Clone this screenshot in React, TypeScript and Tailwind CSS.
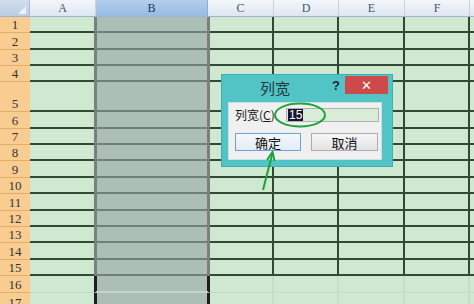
import React from "react";

const rowHeights = [16, 17, 16, 16, 30, 17, 16, 16, 17, 16, 17, 16, 16, 17, 16, 17, 11];

const headerCols = [
  { l: "A", w: "w-[66px]" },
  { l: "B", w: "w-[112px]" },
  { l: "C", w: "w-[66px]" },
  { l: "D", w: "w-[65px]" },
  { l: "E", w: "w-[66px]" },
  { l: "F", w: "w-[65px]" },
];

const serif = { fontFamily: '"Liberation Serif", "DejaVu Serif", serif' };
const cjk = { fontFamily: '"Noto Sans CJK SC", "Noto Sans", sans-serif' };

function Row({ h, i }: { h: number; i: number }) {
  const grid = i < 15;
  const lineB = grid ? "border-b-2 border-b-[#2e4a35]" : "border-b border-b-[#c4dcc6]";
  const last = i === 16;
  return (
    <div className="flex" style={{ height: h }}>
      <div
        className={`w-[30px] flex justify-center overflow-hidden bg-[#f9cd92] text-[13px] leading-none text-[#333] ${
          last ? "items-start pt-[3px]" : "items-end pb-[1px] border-b border-b-[#e2ae6a]"
        }`}
        style={serif}
      >
        {i + 1}
      </div>
      <div className={`w-[64px] bg-[#cfe8d0] ${last ? "" : lineB}`} />
      <div
        className={`w-[116px] bg-[#abbfb7] border-x-[3px] ${
          grid ? "border-x-[#7b807d] border-b-2 border-b-[#6f8077]" : "border-x-[#1e1e1e]"
        } ${!grid && !last ? "border-b-2 border-b-[#c3d4cc]" : ""}`}
      />
      {["w-[64px]", "w-[65px]", "w-[66px]", "w-[65px]"].map((w, k) => (
        <div
          key={k}
          className={`${w} bg-[#cfe8d0] border-r-2 ${grid ? "border-r-[#2e4a35]" : "border-r-[#c6dec8]"} ${
            last ? "" : lineB
          }`}
        />
      ))}
      <div className={`flex-1 bg-[#cfe8d0] ${last ? "" : lineB}`} />
    </div>
  );
}

export default function App() {
  return (
    <div className="relative w-[474px] h-[304px] overflow-hidden bg-[#cfe8d0]">
      {/* header */}
      <div className="flex h-[17px] border-b border-b-[#9fb4cc]">
        <div className="relative w-[30px] bg-gradient-to-b from-[#d3deec] to-[#bccde3] border-r border-r-[#aebfd5]">
          <div
            className="absolute right-[3px] bottom-[2px] w-[8px] h-[8px] bg-[#eef3f9]"
            style={{ clipPath: "polygon(100% 0, 100% 100%, 0 100%)" }}
          />
        </div>
        {headerCols.map((c) => (
          <div
            key={c.l}
            className={`${c.w} flex items-center justify-center text-[12px] leading-none border-r ${
              c.l === "B"
                ? "bg-gradient-to-b from-[#b3cdec] to-[#98bbe3] text-[#2a3a55] border-r-[#8eadd3]"
                : "bg-gradient-to-b from-[#f4f7fb] to-[#dde6f1] text-[#4a5566] border-r-[#c8d4e2]"
            }`}
            style={serif}
          >
            {c.l}
          </div>
        ))}
        <div className="flex-1 bg-gradient-to-b from-[#f4f7fb] to-[#dde6f1]" />
      </div>

      {rowHeights.map((h, i) => (
        <Row key={i} h={h} i={i} />
      ))}

      {/* dialog */}
      <div className="absolute left-[221px] top-[74px] w-[172px] h-[93px] bg-[#53c4c6] border border-[#3eaeb2] flex flex-col">
        <div className="h-[27px] flex items-start" style={cjk}>
          <div className="w-[38px]" />
          <div className="w-[32px] pt-[3px] text-[15px] leading-[20px] text-[#1f3d40]">列宽</div>
          <div className="w-[40px]" />
          <div className="w-[14px] pt-[3px] text-[13px] font-bold leading-[16px] text-[#1e2a36]" style={{ fontFamily: '"Liberation Sans", sans-serif' }}>
            ?
          </div>
          <div className="ml-[-1px] mt-[1px] w-[43px] h-[18px] bg-[#cc4a4a] flex items-center justify-center">
            <span className="text-white text-[13px] font-bold leading-none" style={{ fontFamily: '"DejaVu Sans", sans-serif' }}>
              ✕
            </span>
          </div>
        </div>
        <div className="ml-[6px] w-[154px] h-[58px] bg-[#f0f0f0] border border-[#c9e0e0] flex flex-col" style={cjk}>
          <div className="flex items-center mt-[5px] h-[14px]">
            <span className="ml-[6px] w-[51px] text-[12px] leading-none text-[#1a1a1a] whitespace-nowrap">
              列宽(<span className="underline">C</span>)
            </span>
            <div className="w-[93px] h-[14px] border border-[#a9b2ad] bg-[#d9ecd7] flex items-center">
              <span
                className="ml-[1px] px-[1px] bg-[#1b1530] text-white text-[12px] leading-[12px]"
                style={{ fontFamily: '"Liberation Sans", sans-serif' }}
              >
                15
              </span>
            </div>
          </div>
          <div className="flex mt-[11px]">
            <div className="ml-[6px] w-[66px] h-[18px] border border-[#6ea2d8] bg-gradient-to-b from-[#f4f8fc] to-[#e3ecf5] flex items-center justify-center text-[13px] leading-none text-[#111]">
              确定
            </div>
            <div className="ml-[10px] w-[67px] h-[18px] border border-[#acacac] bg-gradient-to-b from-[#f5f5f5] to-[#e4e4e4] flex items-center justify-center text-[13px] leading-none text-[#111]">
              取消
            </div>
          </div>
        </div>
      </div>

      {/* annotations */}
      <svg className="absolute inset-0 pointer-events-none" width="474" height="304" viewBox="0 0 474 304">
        <ellipse cx="300" cy="115" rx="25" ry="11.5" fill="none" stroke="#22a23a" strokeWidth="2" />
        <line x1="263" y1="190" x2="272.5" y2="153" stroke="#1fa03a" strokeWidth="2" />
        <polyline points="267,160 272.5,152 274.5,161" fill="none" stroke="#1fa03a" strokeWidth="2" />
      </svg>
    </div>
  );
}
